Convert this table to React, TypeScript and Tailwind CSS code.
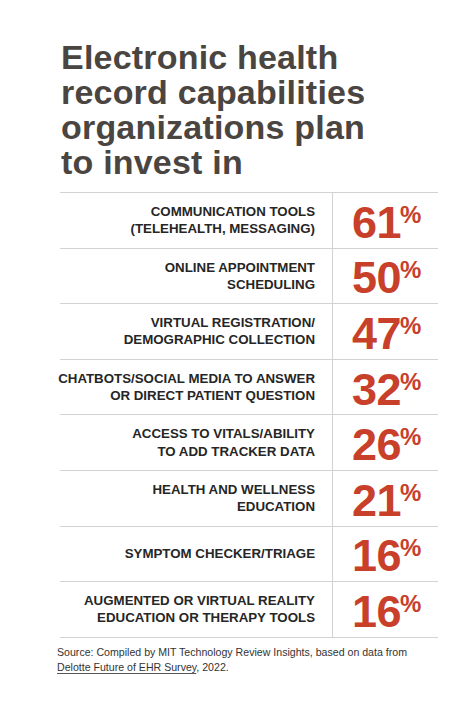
import React from "react";

const rows: { label: string[]; value: string }[] = [
  { label: ["COMMUNICATION TOOLS", "(TELEHEALTH, MESSAGING)"], value: "61" },
  { label: ["ONLINE APPOINTMENT", "SCHEDULING"], value: "50" },
  { label: ["VIRTUAL REGISTRATION/", "DEMOGRAPHIC COLLECTION"], value: "47" },
  { label: ["CHATBOTS/SOCIAL MEDIA TO ANSWER", "OR DIRECT PATIENT QUESTION"], value: "32" },
  { label: ["ACCESS TO VITALS/ABILITY", "TO ADD TRACKER DATA"], value: "26" },
  { label: ["HEALTH AND WELLNESS", "EDUCATION"], value: "21" },
  { label: ["SYMPTOM CHECKER/TRIAGE"], value: "16" },
  { label: ["AUGMENTED OR VIRTUAL REALITY", "EDUCATION OR THERAPY TOOLS"], value: "16" },
];

export default function App() {
  return (
    <div
      className="w-[474px] h-[701px] bg-white overflow-hidden"
      style={{ fontFamily: '"Liberation Sans", Arial, sans-serif' }}
    >
      <div className="pt-[40px] pl-[61px]">
        <h1 className="text-[34px] leading-[35px] font-bold text-[#4a4541] tracking-[0.2px]">
          Electronic health
          <br />
          record capabilities
          <br />
          organizations plan
          <br />
          to invest in
        </h1>
      </div>
      <div className="mt-[12px] ml-[60px] w-[378px] border-t border-[#d2d2d2]">
        {rows.map((r, i) => (
          <div key={i} className="flex h-[55.6px] border-b border-[#d2d2d2]">
            <div className="w-[273px] border-r border-[#d2d2d2] flex flex-col justify-center items-end pr-[17px] text-[13.3px] leading-[17.3px] font-bold text-[#262626] tracking-[0px] text-right">
              {r.label.map((l, j) => (
                <div key={j} className="whitespace-nowrap">
                  {l}
                </div>
              ))}
            </div>
            <div className="flex-1 flex items-center pl-[19px] pt-[5px]">
              <div className="flex items-start text-[#c8402a] font-bold">
                <span className="text-[45px] leading-[44px] tracking-[-0.5px]">{r.value}</span>
                <span className="text-[24px] leading-[24px] mt-[2px] ml-[-1px]">%</span>
              </div>
            </div>
          </div>
        ))}
      </div>
      <div className="ml-[57px] mt-[7px] text-[10.6px] leading-[15px] text-[#333333]">
        Source: Compiled by MIT Technology Review Insights, based on data from
        <br />
        <span className="underline decoration-[#555] underline-offset-2">Delotte Future of EHR Survey</span>, 2022.
      </div>
    </div>
  );
}
